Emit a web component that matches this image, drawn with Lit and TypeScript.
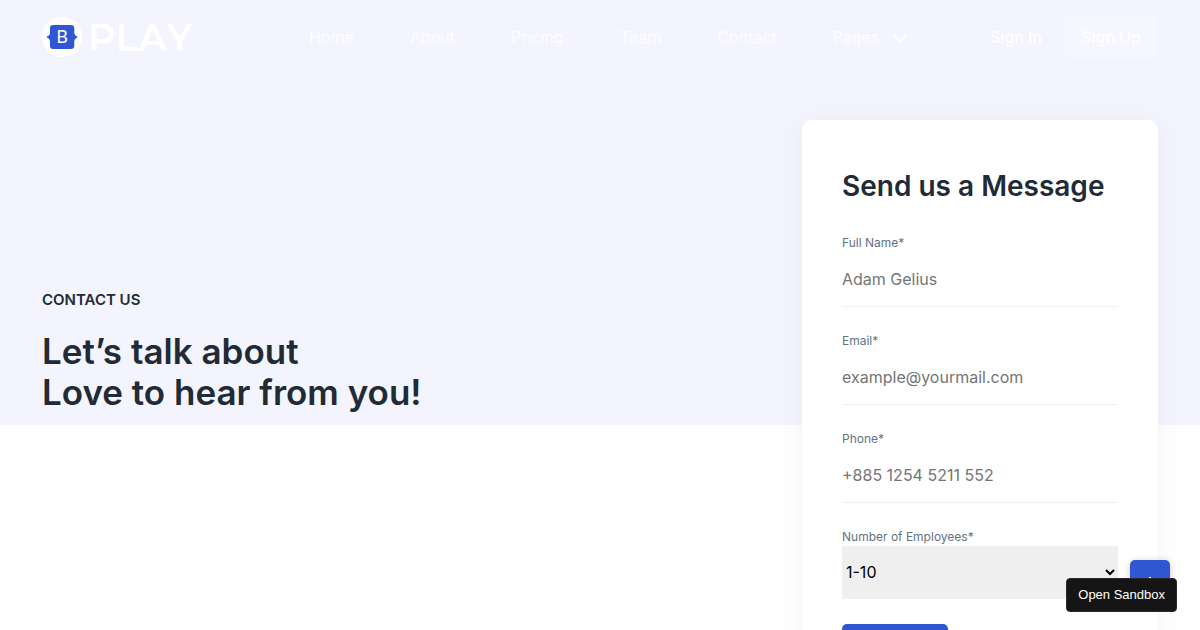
import { LitElement, html, css } from "lit";
import { customElement } from "lit/decorators.js";

const links = ["Home", "About", "Pricing", "Team", "Contact"];

const fields = [
  { id: "name", label: "Full Name*", type: "text", placeholder: "Adam Gelius" },
  { id: "email", label: "Email*", type: "email", placeholder: "example@yourmail.com" },
  { id: "phone", label: "Phone*", type: "text", placeholder: "+885 1254 5211 552" },
];

@customElement("app-root")
export class AppRoot extends LitElement {
  static styles = css`
    :host {
      display: block;
      position: relative;
      height: 100vh;
      overflow: hidden;
      color: #212b36;
      background: #fff;
      font-family: Inter, "Liberation Sans", sans-serif;
      font-size: 16px;
      line-height: 24px;
    }
    * {
      box-sizing: border-box;
    }
    h2,
    h3 {
      margin: 0;
      font-weight: 600;
    }
    a {
      color: inherit;
      text-decoration: none;
    }
    .container {
      max-width: 1140px;
      margin: 0 auto;
      padding: 0 12px;
    }
    .page {
      background: linear-gradient(#f3f4fe 425px, #fff 425px);
    }
    .header {
      display: flex;
      align-items: center;
      height: 74px;
      color: #fff;
    }
    .logo {
      display: flex;
      align-items: center;
      gap: 6px;
      width: 267px;
      flex: none;
    }
    .logo svg {
      width: 40px;
      height: 40px;
    }
    .mark {
      font: 400 18px "Noto Sans", sans-serif;
      fill: #fff;
    }
    .brand {
      font-size: 38px;
      line-height: 38px;
      padding-top: 2px;
      font-weight: 600;
      font-kerning: none;
      font-family: Montserrat, Inter, sans-serif;
    }
    .nav {
      display: flex;
      flex: 1;
      gap: 56px;
      opacity: 0.9;
    }
    .pages {
      display: flex;
      align-items: center;
      gap: 13px;
    }
    .pages svg {
      width: 16px;
      height: 16px;
      margin-top: 2px;
    }
    .actions {
      display: flex;
      align-items: center;
      gap: 22px;
      font-weight: 500;
    }
    .signup {
      padding: 9px 17px;
      border-radius: 6px;
      background: rgba(255, 255, 255, 0.3);
    }
    .contact {
      display: grid;
      grid-template-columns: 1fr 356px;
      gap: 24px;
      padding-top: 46px;
      padding-bottom: 40px;
    }
    .intro {
      padding-top: 168px;
    }
    .eyebrow {
      display: block;
      font-size: 15px;
      font-weight: 600;
      margin-bottom: 19px;
    }
    .intro h2 {
      font-size: 35px;
      line-height: 41px;
    }
    .card {
      padding: 48px 40px;
      background: #fff;
      border-radius: 10px;
      box-shadow: 0 4px 28px rgba(0, 0, 0, 0.05);
    }
    .card h3 {
      font-size: 28px;
      line-height: 36px;
      margin-bottom: 30px;
      white-space: nowrap;
    }
    .field {
      margin-bottom: 25px;
    }
    .field label {
      display: block;
      font-size: 12px;
      line-height: 18px;
      color: #637381;
    }
    .field input {
      display: block;
      width: 100%;
      height: 55px;
      padding: 0;
      border: 0;
      border-bottom: 1px solid #f1f1f1;
      outline: 0;
      background: transparent;
      font: inherit;
    }
    .field input::placeholder {
      color: #757575;
    }
    .field select {
      display: block;
      width: 100%;
      height: 53px;
      padding-bottom: 2px;
      border: 0;
      border-radius: 0;
      background-color: #efefef;
      color: #000;
      font: inherit;
    }
    .send {
      display: block;
      width: 106px;
      height: 54px;
      border: 0;
      border-radius: 5px;
      background: #3056d3;
    }
    .top {
      position: fixed;
      right: 30px;
      bottom: 30px;
      width: 40px;
      height: 40px;
      border: 0;
      border-radius: 5px;
      background: #3056d3;
      display: flex;
      justify-content: center;
      padding: 15px 0 0;
      box-shadow: 0 1px 6px rgba(0, 0, 0, 0.2);
    }
    .top svg {
      width: 14px;
      height: 10px;
    }
    .sandbox {
      position: fixed;
      right: 23px;
      bottom: 18px;
      height: 34px;
      padding: 0 11px;
      border: 1px solid #2e2a2c;
      border-radius: 4px;
      background: #151515;
      color: #fff;
      font: 400 13px/16px "Liberation Sans", sans-serif;
      white-space: nowrap;
    }
  `;

  render() {
    return html`
      <div class="page">
        <header class="container header">
          <a class="logo" href="#home" aria-label="Play">
            <svg viewBox="0 0 40 40" aria-hidden="true">
              <circle cx="20" cy="20" r="20" fill="#fff" />
              <path
                fill="#3056d3"
                d="M11 8h18q3 0 3.300 3v4.500q0 3.200 3 4v1.200q-3 .8-3 4V29q-.3 3-3.300 3H11q-3 0-3-3v-4.300q0-3.200-3-4v-1.200q3-.8 3-4V11q0-3 3-3z"
              />
              <text class="mark" x="20" y="26" text-anchor="middle">B</text>
            </svg>
            <span class="brand">PLAY</span>
          </a>
          <nav class="nav">
            ${links.map((l) => html`<a href="#${l.toLowerCase()}">${l}</a>`)}
            <a class="pages" href="#pages"
              >Pages
              <svg viewBox="0 0 16 16" fill="none" stroke="#fff" stroke-width="2" aria-hidden="true">
                <path d="M1.500 5L8 11.500 14.500 5" />
              </svg>
            </a>
          </nav>
          <div class="actions">
            <a href="#login">Sign In</a>
            <a class="signup" href="#signup">Sign Up</a>
          </div>
        </header>
        <main class="container contact">
          <div class="intro">
            <span class="eyebrow">CONTACT US</span>
            <h2>Let’s talk about<br />Love to hear from you!</h2>
          </div>
          <form class="card">
            <h3>Send us a Message</h3>
            ${fields.map(
              (f) => html`<div class="field">
                <label for=${f.id}>${f.label}</label>
                <input id=${f.id} type=${f.type} placeholder=${f.placeholder} />
              </div>`
            )}
            <div class="field">
              <label for="employees">Number of Employees*</label>
              <select id="employees">
                <option>1-10</option>
              </select>
            </div>
            <button class="send" type="button" aria-label="Send message"></button>
          </form>
        </main>
      </div>
      <button class="top" aria-label="Back to top">
        <svg viewBox="0 0 14 10" fill="none" stroke="#fff" stroke-width="1" aria-hidden="true">
          <path d="M.5 8.500L7 2l6.500 6.500" />
        </svg>
      </button>
      <button class="sandbox">Open Sandbox</button>
    `;
  }
}
